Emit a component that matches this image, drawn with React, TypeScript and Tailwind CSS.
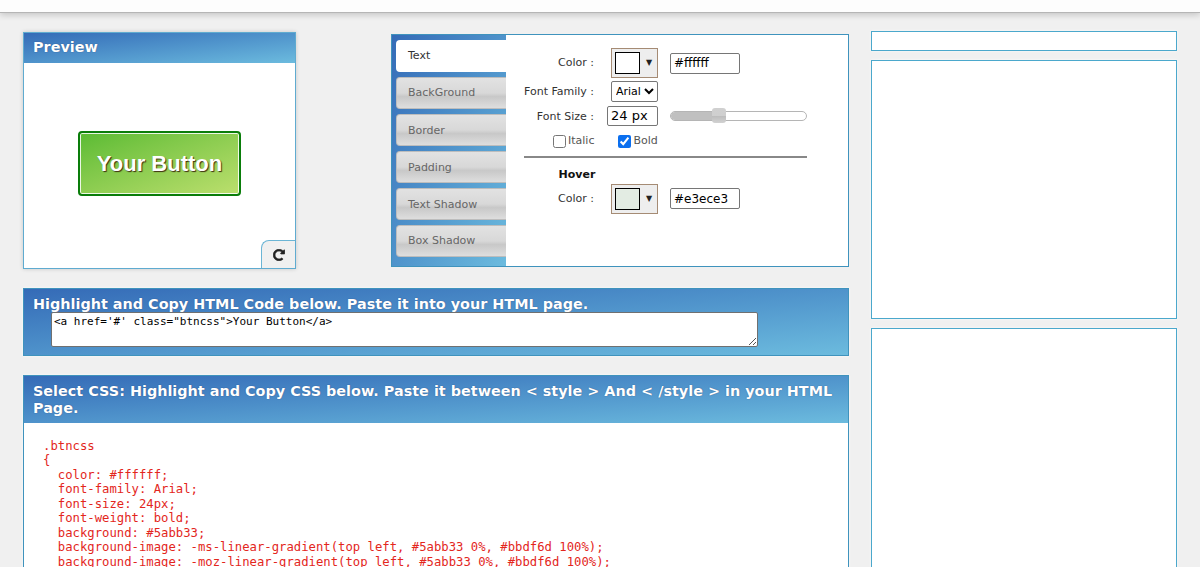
import React from "react";
import { FaRedoAlt } from "react-icons/fa";

const tabs = ["BackGround", "Border", "Padding", "Text Shadow", "Box Shadow"];

const cssLines = [
  ".btncss",
  "{",
  "  color: #ffffff;",
  "  font-family: Arial;",
  "  font-size: 24px;",
  "  font-weight: bold;",
  "  background: #5abb33;",
  "  background-image: -ms-linear-gradient(top left, #5abb33 0%, #bbdf6d 100%);",
  "  background-image: -moz-linear-gradient(top left, #5abb33 0%, #bbdf6d 100%);",
];

const ColorPicker = ({ swatch, value }: { swatch: string; value: string }) => (
  <div className="flex items-center">
    <div className="flex h-[30px] w-[47px] items-center border border-[#a58b74] bg-[#eeeeee] pl-[3px]">
      <div className={`h-[22px] w-[25px] border border-black ${swatch}`} />
      <span className="ml-[6px] text-[8px] leading-none text-[#222222]">▼</span>
    </div>
    <div className="ml-[12px] flex h-[21px] w-[70px] items-center rounded-[2px] border border-[#767676] bg-white pl-[3px] text-[12px] text-black">
      {value}
    </div>
  </div>
);

const Label = ({ children }: { children: React.ReactNode }) => (
  <div className="w-[70px] whitespace-nowrap pt-[1px] text-right text-[11px] text-[#333333]">{children}</div>
);

export default function App() {
  return (
    <div className="h-[567px] overflow-hidden bg-[#f0f0f0] font-['DejaVu_Sans',sans-serif]">
      <div className="h-[13px] border-b border-[#b5b5b5] bg-[#fdfdfd] shadow-[0_2px_6px_rgba(0,0,0,0.18)]" />

      <div className="flex gap-[22px] pl-[23px] pt-[18px]">
        {/* Left column */}
        <div className="w-[826px] shrink-0 pt-[1px]">
          <div className="flex items-start justify-between">
            {/* Preview */}
            <div className="relative h-[237px] w-[273px] overflow-hidden border border-[#5fabd0] bg-white shadow-[0_0_4px_rgba(0,0,0,0.18)]">
              <div className="flex h-[30px] items-center bg-linear-to-br from-[#356bb7] to-[#6cbbde] pl-[9px] text-[14.4px] font-bold text-white [text-shadow:0_0_1px_rgba(20,40,90,0.7)]">
                Preview
              </div>
              <div className="flex h-[205px] items-center justify-center">
                <a
                  href="#"
                  className="mb-[4px] flex h-[65px] w-[163px] items-center justify-center rounded-[4px] border-2 border-[#0a7d0a] bg-linear-to-br from-[#5abb33] to-[#bbdf6d] font-['Liberation_Sans',sans-serif] text-[22px] font-bold text-white shadow-[inset_0_0_0_1px_rgba(255,255,255,0.85)] [text-shadow:1px_1px_1px_#3d3010]"
                >
                  Your Button
                </a>
              </div>
              <div className="absolute bottom-0 right-0 flex h-[28px] w-[34px] items-center justify-center rounded-tl-[8px] border-l border-t border-[#6bb5d5] bg-[#f0f0f0]">
                <FaRedoAlt className="h-[12px] w-[12px] stroke-[24px] text-[#222222]" />
              </div>
            </div>

            {/* Style tabs */}
            <div className="mt-[2px] flex h-[233px] w-[458px] border border-[#3f93bd] bg-white">
              <div className="flex w-[114px] shrink-0 flex-col gap-[5px] bg-linear-to-br from-[#356bb7] to-[#6cbbde] pl-[4px] pt-[5px]">
                <div className="flex h-[32px] items-center rounded-l-[4px] bg-white pl-[12px] text-[11px] text-[#333333]">
                  Text
                </div>
                {tabs.map((tab) => (
                  <div
                    key={tab}
                    className={`flex h-[32px] items-center rounded-l-[4px] border border-r-0 border-[#bdbdbd] bg-[linear-gradient(#e2e2e2_0%,#d8d8d8_50%,#c8c8c8_62%,#dedede_100%)] pl-[11px] text-[11px] text-[#666666] ${
                      tab === "BackGround" || tab === "Box Shadow" ? "" : "pt-[2px]"
                    }`}
                  >
                    {tab}
                  </div>
                ))}
              </div>

              <div className="flex-1 pl-[18px] pt-[13px]">
                <div className="flex items-center gap-[17px]">
                  <Label>Color :</Label>
                  <ColorPicker swatch="bg-white" value="#ffffff" />
                </div>
                <div className="mt-[3px] flex items-center gap-[17px]">
                  <Label>Font Family :</Label>
                  <select className="h-[21px] w-[47px] rounded-[2px] border border-[#767676] bg-white text-[11px] text-black">
                    <option>Arial</option>
                  </select>
                </div>
                <div className="mt-[4px] flex items-center">
                  <div className="pt-[1px]">
                    <Label>Font Size :</Label>
                  </div>
                  <div className="ml-[13px] flex h-[20px] w-[51px] items-center rounded-[2px] border border-[#767676] bg-white pl-[3px] text-[13px] text-black">
                    24 px
                  </div>
                  {/* Slider */}
                  <div className="relative ml-[12px] h-[10px] w-[137px] rounded-full border border-[#b5b5b5] bg-white">
                    <div className="h-full w-[44px] rounded-l-full bg-[#c0c0c0]" />
                    <div className="absolute left-[41px] top-[-4px] h-[15px] w-[14px] rounded-[3px] bg-[linear-gradient(#d0d0d0_0%,#cfcfcf_50%,#bdbdbd_55%,#d2d2d2_100%)]" />
                  </div>
                </div>
                <div className="mt-[7px] flex h-[16px] items-center text-[11px] text-[#555555]">
                  <input type="checkbox" readOnly className="ml-[29px] h-[13px] w-[13px]" />
                  <span className="ml-[2px]">Italic</span>
                  <input type="checkbox" checked readOnly className="ml-[24px] h-[13px] w-[13px] accent-[#0b6fef]" />
                  <span className="ml-[2px]">Bold</span>
                </div>
                <div className="mt-[7px] h-[2px] w-[283px] bg-[#888888]" />
                <div className="mt-[9px] w-[106px] text-center text-[11px] font-bold text-[#111111]">Hover</div>
                <div className="flex items-center gap-[17px]">
                  <div className="pt-[1px]">
                    <Label>Color :</Label>
                  </div>
                  <ColorPicker swatch="bg-[#e3ece3]" value="#e3ece3" />
                </div>
              </div>
            </div>
          </div>

          {/* HTML code */}
          <div className="mt-[19px] h-[68px] border border-[#3f93bd] bg-linear-to-br from-[#356bb7] to-[#6cbbde] pl-[9px] shadow-[0_0_2px_rgba(255,255,255,0.9)]">
            <div className="h-[23px] text-[14.4px] font-bold leading-[31px] text-white [text-shadow:0_0_1px_rgba(20,40,90,0.7)]">
              Highlight and Copy HTML Code below. Paste it into your HTML page.
            </div>
            <div className="relative ml-[18px] h-[35px] w-[707px] rounded-[2px] border border-[#707070] bg-white pl-[2px] font-['DejaVu_Sans_Mono',monospace] text-[11px] leading-[18px] text-black">
              {`<a href='#' class="btncss">Your Button</a>`}
              <svg viewBox="0 0 9 9" className="absolute bottom-0 right-0 h-[9px] w-[9px]" stroke="#555555" fill="none">
                <path d="M1 8 8 1M5 8 8 5" />
              </svg>
            </div>
          </div>

          {/* CSS code */}
          <div className="mt-[19px] h-[300px] border border-[#3f93bd] bg-white shadow-[0_0_2px_rgba(255,255,255,0.9)]">
            <div className="h-[47px] bg-linear-to-br from-[#356bb7] to-[#6cbbde] pl-[9px] pr-[8px] pt-[7px] text-[14.4px] font-bold leading-[17px] text-white [text-shadow:0_0_1px_rgba(20,40,90,0.7)]">
              Select CSS: Highlight and Copy CSS below. Paste it between &lt; style &gt; And &lt; /style &gt; in your HTML Page.
            </div>
            <pre className="pl-[19px] pt-[16px] font-['DejaVu_Sans_Mono',monospace] text-[12.25px] leading-[14.45px] text-[#e3261c]">
              {cssLines.join("\n")}
            </pre>
          </div>
        </div>

        {/* Right column */}
        <div className="flex w-[306px] shrink-0 flex-col gap-[9px]">
          <div className="h-[20px] border border-[#4ba8cc] bg-white shadow-[0_0_2px_rgba(255,255,255,0.9)]" />
          <div className="h-[259px] border border-[#4ba8cc] bg-white shadow-[0_0_2px_rgba(255,255,255,0.9)]" />
          <div className="h-[300px] border border-[#4ba8cc] bg-white shadow-[0_0_2px_rgba(255,255,255,0.9)]" />
        </div>
      </div>
    </div>
  );
}
